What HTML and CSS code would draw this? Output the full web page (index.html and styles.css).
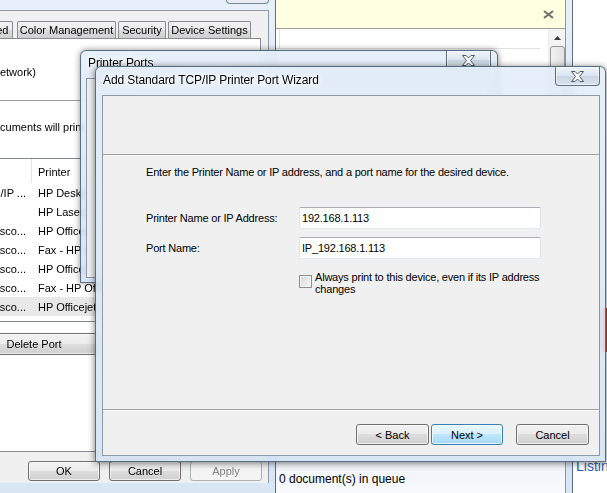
FILE: index.html
```html
<!DOCTYPE html>
<html lang="en">
<head>
    <meta charset="UTF-8">
    <title>Add Standard TCP/IP Printer Port Wizard</title>
    <link rel="stylesheet" href="styles.css">
</head>
<body>
<div class="desktop">

    <!-- browser window far behind -->
    <div class="browser">
        <div class="browser-banner"></div>
        <div class="browser-link">Listings</div>
    </div>

    <!-- print queue window -->
    <div class="win queue">
        <div class="queue-client">
            <div class="infobar">
                <svg class="infobar-close" width="11" height="9" viewBox="0 0 11 9">
                    <path d="M1 1 L10 8 M10 1 L1 8" stroke="#707070" stroke-width="2.2" fill="none"/>
                </svg>
            </div>
            <div class="queue-body">
                <div class="queue-list">
                    <div class="queue-head"><span class="queue-col"></span></div>
                </div>
                <div class="scrollbar">
                    <svg class="scroll-up" width="7" height="4" viewBox="0 0 7 4"><path d="M0 4 L3.5 0 L7 4z" fill="#3c3c3c"/></svg>
                    <div class="scroll-thumb"></div>
                </div>
            </div>
            <div class="statusbar">0 document(s) in queue</div>
        </div>
    </div>

    <!-- printer properties -->
    <div class="win props">
        <div class="props-caption"><span class="props-close"></span></div>
        <div class="props-client">
            <div class="tabs">
                <div class="tab tab-adv">Advanced</div>
                <div class="tab tab-color">Color Management</div>
                <div class="tab tab-sec">Security</div>
                <div class="tab tab-dev">Device Settings</div>
            </div>
            <div class="tab-page">
                <div class="pp-name"><span>HP Officejet (Network)</span></div>
                <div class="pp-sep"></div>
                <div class="pp-note">Documents will print</div>
                <div class="port-list">
                    <div class="port-row port-head">
                        <div class="col-desc"><span>Description</span></div>
                        <div class="col-printer">Printer</div>
                    </div>
                    <div class="port-row">
                        <div class="col-desc"><span>Standard TCP/IP ...</span></div>
                        <div class="col-printer">HP Deskjet</div>
                    </div>
                    <div class="port-row">
                        <div class="col-desc"><span></span></div>
                        <div class="col-printer">HP LaserJet</div>
                    </div>
                    <div class="port-row">
                        <div class="col-desc"><span>Network Disco...</span></div>
                        <div class="col-printer">HP Officejet</div>
                    </div>
                    <div class="port-row">
                        <div class="col-desc"><span>Network Disco...</span></div>
                        <div class="col-printer">Fax - HP Officejet</div>
                    </div>
                    <div class="port-row">
                        <div class="col-desc"><span>Network Disco...</span></div>
                        <div class="col-printer">HP Officejet</div>
                    </div>
                    <div class="port-row">
                        <div class="col-desc"><span>Network Disco...</span></div>
                        <div class="col-printer">Fax - HP Officejet</div>
                    </div>
                    <div class="port-row selected">
                        <div class="col-desc"><span>Network Disco...</span></div>
                        <div class="col-printer">HP Officejet</div>
                    </div>
                </div>
                <div class="pp-buttons">
                    <button class="btn btn-delete">Delete Port</button>
                </div>
            </div>
            <div class="props-footer">
                <button class="btn">OK</button>
                <button class="btn">Cancel</button>
                <button class="btn" disabled>Apply</button>
            </div>
        </div>
    </div>

    <!-- printer ports dialog -->
    <div class="win ports">
        <div class="caption">
            <span class="caption-title">Printer Ports</span>
            <span class="caption-close">
                <svg width="13" height="11" viewBox="0 0 13 11"><path d="M0.5 0.5 H4 L6.5 3 L9 0.5 H12.5 L8.5 5.5 L12.5 10.5 H9 L6.5 8 L4 10.5 H0.5 L4.5 5.5 Z" fill="#fff" stroke="#4b5665"/></svg>
            </span>
        </div>
        <div class="ports-client"></div>
    </div>

    <!-- wizard -->
    <div class="win wizard">
        <div class="caption">
            <span class="caption-title">Add Standard TCP/IP Printer Port Wizard</span>
            <span class="caption-close">
                <svg width="13" height="11" viewBox="0 0 13 11"><path d="M0.5 0.5 H4 L6.5 3 L9 0.5 H12.5 L8.5 5.5 L12.5 10.5 H9 L6.5 8 L4 10.5 H0.5 L4.5 5.5 Z" fill="#fff" stroke="#4b5665"/></svg>
            </span>
        </div>
        <div class="wz-client">
            <div class="wz-head"></div>
            <div class="wz-body">
                <p class="wz-intro">Enter the Printer Name or IP address, and a port name for the desired device.</p>
                <div class="wz-form">
                    <label class="wz-label">Printer Name or IP Address:</label>
                    <div class="textbox">192.168.1.113</div>
                    <label class="wz-label">Port Name:</label>
                    <div class="textbox">IP_192.168.1.113</div>
                    <span></span>
                    <div class="check-row">
                        <span class="checkbox"></span>
                        <span class="check-label">Always print to this device, even if its IP address changes</span>
                    </div>
                </div>
            </div>
            <div class="wz-foot">
                <button class="btn btn-back">&lt; Back</button>
                <button class="btn btn-default">Next &gt;</button>
                <button class="btn btn-cancel">Cancel</button>
            </div>
        </div>
    </div>

</div>
</body>
</html>
```

FILE: styles.css
```css
* {
    box-sizing: border-box;
}

body {
    margin: 0;
    font-family: "Liberation Sans", Arial, sans-serif;
    font-size: 11px;
    color: #000;
    background: #fff;
}

.desktop {
    position: relative;
    width: 607px;
    height: 493px;
    overflow: hidden;
    background: #fff;
}

/* aero glass frame, shared */
.win {
    position: absolute;
    display: flex;
    flex-direction: column;
    border: 1px solid rgba(48, 66, 90, 0.75);
    background: linear-gradient(180deg, rgba(226, 237, 249, 0.86), rgba(210, 226, 243, 0.86));
    backdrop-filter: blur(3px);
}

.caption {
    display: flex;
    align-items: flex-start;
    flex: none;
}

.caption-title {
    padding-top: 5px;
    line-height: 16px;
    font-size: 12px;
    letter-spacing: -0.1px;
    text-shadow: 0 0 8px #fff, 0 0 5px #fff, 0 0 2px #fff;
}

.caption-close {
    margin-left: auto;
    width: 45px;
    height: 19px;
    display: flex;
    align-items: center;
    justify-content: center;
    border: 1px solid rgba(62, 78, 98, 0.8);
    border-top: none;
    border-radius: 0 0 4px 4px;
    background: linear-gradient(180deg, #eef3f8 0%, #dbe5ef 50%, #c9d6e3 51%, #d7e1ec 100%);
    box-shadow: inset 0 0 0 1px rgba(255, 255, 255, 0.6);
}

/* far right browser window */
.browser {
    position: absolute;
    left: 572px;
    top: 0;
    width: 35px;
    height: 493px;
    border-left: 1px solid #a6adb6;
    background: #fff;
    padding-left: 3px;
}

.browser-banner {
    margin: 308px 0 0 26px;
    height: 44px;
    background: linear-gradient(90deg, #d8572a, #b9411c);
}

.browser-link {
    margin-top: 106px;
    font-size: 14px;
    color: #2a66b0;
    white-space: nowrap;
}

/* print queue */
.queue {
    left: 276px;
    top: 0;
    width: 297px;
    height: 493px;
    border-top: none;
    border-left: none;
    border-bottom: none;
    padding-right: 6px;
}

.queue-client {
    height: 100%;
    display: flex;
    flex-direction: column;
    background: #fff;
    border-right: 1px solid #8b96a3;
}

.infobar {
    height: 29px;
    flex: none;
    background: #ffffe1;
    border-bottom: 1px solid #a0a0a0;
    display: flex;
    justify-content: flex-end;
    padding: 10px 11px 0 0;
}

.queue-body {
    flex: 1;
    display: flex;
}

.queue-list {
    flex: 1;
    padding-right: 8px;
}

.queue-head {
    height: 20px;
    border-bottom: 1px solid #e2e2e2;
    padding-left: 3px;
}

.queue-col {
    display: block;
    width: 1px;
    height: 19px;
    background: #e2e2e2;
}

.scrollbar {
    width: 17px;
    background: #f4f4f4;
    border-left: 1px solid #ececec;
    display: flex;
    flex-direction: column;
    align-items: center;
    padding-top: 7px;
}

.scroll-thumb {
    margin-top: 6px;
    width: 15px;
    height: 80px;
    border: 1px solid #979797;
    border-radius: 3px;
    background: linear-gradient(90deg, #f1f1f1, #e2e2e2);
}

.statusbar {
    flex: none;
    height: 38px;
    padding: 16px 0 0 3px;
    line-height: 14px;
    font-size: 12px;
    background: linear-gradient(180deg, #eef3f9, #f8fafd);
    border-top: 1px solid #d6dde6;
}

/* printer properties */
.props {
    left: 0;
    top: 0;
    width: 276px;
    height: 493px;
    border-top: none;
    border-left: none;
    border-bottom: none;
    padding: 0 6px 10px 0;
}

.props-caption {
    height: 10px;
    display: flex;
    justify-content: flex-end;
}

.props-close {
    width: 43px;
    height: 4px;
    border: 1px solid #7d8896;
    border-top: none;
    border-radius: 0 0 4px 4px;
    background: #e9edf2;
}

.props-client {
    flex: 1;
    display: flex;
    flex-direction: column;
    background: #f0f0f0;
    border-top: 1px solid #8d99a7;
    border-right: 1px solid #8d99a7;
    padding-top: 10px;
}

.tabs {
    display: flex;
    height: 17px;
}

.tab {
    flex: none;
    height: 17px;
    border: 1px solid #898c95;
    border-bottom: none;
    border-radius: 2px 2px 0 0;
    background: linear-gradient(180deg, #f2f2f2 0%, #ebebeb 50%, #dddddd 51%, #cfcfcf 100%);
    text-align: center;
    line-height: 16px;
    white-space: nowrap;
}

.tab-adv {
    width: 58px;
    margin-left: -45px;
}

.tab-color {
    width: 99px;
    margin-left: 4px;
}

.tab-sec {
    width: 48px;
    margin-left: 2px;
}

.tab-dev {
    width: 83px;
    margin-left: 2px;
}

.tab-page {
    height: 414px;
    margin-right: 7px;
    background: #fff;
    border: 1px solid #898c95;
    border-left: none;
    overflow: hidden;
}

.pp-name {
    display: flex;
    justify-content: flex-end;
    width: 36px;
    margin-top: 25px;
    line-height: 16px;
    white-space: nowrap;
}

.pp-name span {
    flex: none;
}

.pp-sep {
    margin-top: 20px;
    height: 1px;
    background: #a0a0a0;
}

.pp-note {
    margin: 18px 0 0 -14px;
    line-height: 16px;
    white-space: nowrap;
}

.port-list {
    margin-top: 23px;
    border-top: 1px solid #828790;
    border-bottom: 1px solid #828790;
    padding-bottom: 5px;
}

.port-row {
    display: flex;
    height: 19px;
    align-items: center;
    white-space: nowrap;
}

.port-row.port-head {
    height: 24px;
    padding-top: 2px;
}

.port-row.selected {
    background: #e8e8e8;
}

.col-desc {
    flex: none;
    width: 32px;
    display: flex;
    justify-content: flex-end;
    padding-right: 6px;
    overflow: hidden;
}

.col-desc span {
    flex: none;
}

.port-head .col-desc {
    height: 24px;
    margin-top: -2px;
    border-right: 1px solid #e5e5e5;
    color: transparent;
}

.col-printer {
    padding-left: 6px;
}

.pp-buttons {
    margin-top: 11px;
}

.btn {
    height: 21px;
    width: 73px;
    padding: 0;
    font-family: inherit;
    font-size: 11px;
    color: #000;
    border: 1px solid #707070;
    border-radius: 3px;
    background: linear-gradient(180deg, #f2f2f2 0%, #ebebeb 49%, #dddddd 50%, #cfcfcf 100%);
    box-shadow: inset 0 0 0 1px rgba(255, 255, 255, 0.65);
}

.btn:disabled {
    color: #838383;
    border-color: #adb2b5;
    background: #f4f4f4;
    box-shadow: none;
}

.btn-delete {
    width: 132px;
    height: 22px;
    margin-left: -32px;
}

.props-footer {
    display: flex;
    justify-content: flex-end;
    gap: 9px;
    margin-top: 9px;
    padding-right: 6px;
}

.props-footer .btn {
    width: 72px;
    height: 20px;
}

/* printer ports */
.ports {
    left: 80px;
    top: 50px;
    width: 418px;
    height: 233px;
    border-radius: 6px 6px 0 0;
    padding: 0 6px 4px 5px;
    box-shadow: 0 0 6px rgba(0, 0, 0, 0.45);
}

.ports .caption {
    height: 27px;
}

.ports .caption-title {
    margin-left: 2px;
    padding-top: 4px;
}

.ports-client {
    flex: 1;
    background: #f0f0f0;
    border: 1px solid #8e9aa8;
}

/* wizard */
.wizard {
    left: 95px;
    top: 66px;
    width: 511px;
    height: 396px;
    border-radius: 6px 6px 0 0;
    padding: 0 5px 5px 6px;
    box-shadow: 0 1px 7px rgba(0, 0, 0, 0.55);
}

.wizard .caption {
    height: 28px;
}

.wizard .caption-title {
    margin-left: 1px;
}

.wz-client {
    flex: 1;
    display: flex;
    flex-direction: column;
    background: #f0f0f0;
    border: 1px solid #8e9aa8;
    letter-spacing: -0.2px;
}

.wz-head {
    height: 59px;
    flex: none;
    border-bottom: 1px solid #a0a0a0;
    box-shadow: 0 1px 0 #fff;
}

.wz-body {
    flex: 1;
    padding: 10px 0 0 43px;
}

.wz-intro {
    margin: 0;
    line-height: 14px;
}

.wz-form {
    display: grid;
    grid-template-columns: 153px 242px;
    row-gap: 8px;
    align-items: center;
    margin-top: 28px;
}

.textbox {
    height: 22px;
    padding-left: 2px;
    line-height: 20px;
    background: #fff;
    border: 1px solid;
    border-color: #abadb3 #dbdfe6 #e3e9ef #e2e3ea;
    border-radius: 2px;
}

.check-row {
    display: flex;
    align-items: flex-start;
    gap: 3px;
    margin-top: 8px;
}

.checkbox {
    flex: none;
    width: 13px;
    height: 13px;
    border: 1px solid #8f8f8f;
    background: linear-gradient(135deg, #d6d6d6, #fbfbfb);
    box-shadow: inset 0 0 0 1px #f2f2f2;
}

.check-label {
    width: 236px;
    margin-top: -4px;
    line-height: 12px;
}

.wz-foot {
    flex: none;
    display: flex;
    justify-content: flex-end;
    border-top: 1px solid #a0a0a0;
    box-shadow: inset 0 1px 0 #fff;
    padding: 14px 10px 10px 0;
}

.btn-back {
    margin-right: 2px;
}

.btn-default {
    width: 72px;
    border-color: #3c7fb1;
    background: linear-gradient(180deg, #eaf6fd 0%, #d9f0fc 49%, #bee6fd 50%, #a7d9f5 100%);
}

.btn-cancel {
    margin-left: 13px;
}
```
